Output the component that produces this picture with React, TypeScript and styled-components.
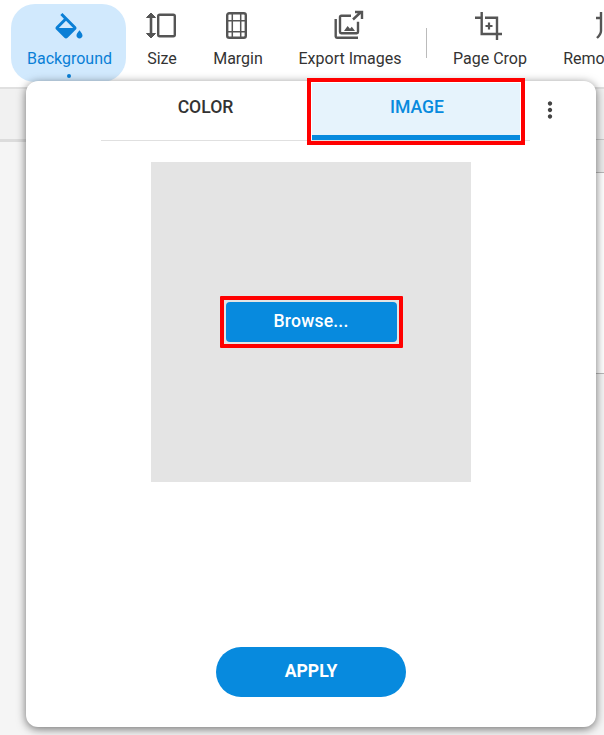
import React from "react";
import styled, { createGlobalStyle } from "styled-components";
import { MdMoreVert } from "react-icons/md";

const GlobalStyle = createGlobalStyle`
  html, body {
    margin: 0;
    padding: 0;
    background: #f5f5f5;
    font-family: Roboto, "Liberation Sans", sans-serif;
    overflow: hidden;
  }
`;

const BucketIcon = () => (
  <svg width="36" height="36" viewBox="0 -3.33 24 24" fill="#0a7fd6">
    <path d="M16.56 8.94 7.62 0 6.21 1.41l2.38 2.38-5.15 5.15c-.59.59-.59 1.54 0 2.12l5.5 5.5c.29.29.68.44 1.06.44s.77-.15 1.06-.44l5.5-5.5c.59-.58.59-1.53 0-2.12zM5.21 10 10 5.21 14.79 10H5.210zM19 11.500s-2 2.170-2 3.500c0 1.100.9 2 2 2s2-.9 2-2c0-1.330-2-3.500-2-3.500z" />
  </svg>
);

const SizeIcon = () => (
  <svg width="36" height="36" viewBox="0 0 36 36" fill="none" stroke="#555">
    <rect x="14.2" y="6.700" width="16.600" height="21.600" rx="1.500" strokeWidth="2.400" />
    <path d="M7 6v23" strokeWidth="2.600" />
    <path d="M2.500 9.500 7 5l4.500 4.500zM2.500 25.500 7 30l4.500-4.500z" fill="#555" strokeWidth="1" />
  </svg>
);

const MarginIcon = () => (
  <svg width="36" height="36" viewBox="0 0 36 36" fill="none" stroke="#555">
    <rect x="7.200" y="5.200" width="18.600" height="24.600" rx="2" strokeWidth="2.400" />
    <path d="M12.300 5v25M20.700 5v25M7 12.700h19M7 23.700h19" strokeWidth="1.500" />
  </svg>
);

const ExportIcon = () => (
  <svg width="36" height="36" viewBox="0 0 36 36" fill="none" stroke="#555" strokeWidth="2.400">
    <path d="M3.700 11v17.500a1.200 1.200 0 0 0 1.200 1.200H26" />
    <path d="M19 7.700h-9.800a1.200 1.200 0 0 0-1.200 1.200v15.200a1.200 1.200 0 0 0 1.200 1.200h15.600a1.200 1.200 0 0 0 1.200-1.200V13.700" />
    <path d="M21 11.500 29 4M23 4h7v7" />
    <path d="M12 23l3.600-5 2.400 2.800 1.800-2 3.200 4.200z" fill="#555" stroke="none" />
  </svg>
);

const CropPlusIcon = () => (
  <svg width="36" height="36" viewBox="0 0 36 36" fill="none" stroke="#555" strokeWidth="2.400">
    <path d="M3 9.700h7M9.700 4v22H30" />
    <path d="M13 9.700h12v22.300" />
    <path d="M17 14.500v7M13.500 18h7" strokeWidth="2.200" />
  </svg>
);

const RemoveIcon = () => (
  <svg width="36" height="36" viewBox="0 0 36 36" fill="none" stroke="#555" strokeWidth="2.400">
    <path d="M22 10h5M27 4v19c0 2.500-1.500 4.500-4 7" />
  </svg>
);

const tools = [
  { label: "Size", icon: <SizeIcon />, width: 72 },
  { label: "Margin", icon: <MarginIcon />, width: 80 },
  { label: "Export Images", icon: <ExportIcon />, width: 144 },
];

const App = () => (
  <Page>
    <GlobalStyle />
    <Toolbar>
      <ActiveTool>
        <BucketIcon />
        <ToolLabel $active>Background</ToolLabel>
        <Dot />
      </ActiveTool>
      {tools.map((tool) => (
        <Tool key={tool.label} $width={tool.width}>
          {tool.icon}
          <ToolLabel>{tool.label}</ToolLabel>
        </Tool>
      ))}
      <Divider />
      <Tool $width={126}>
        <CropPlusIcon />
        <ToolLabel>Page Crop</ToolLabel>
      </Tool>
      <Tool $width={78}>
        <RemoveIcon />
        <ToolLabel>Remove</ToolLabel>
      </Tool>
    </Toolbar>
    <SubBar />
    <Workspace>
      <Sidebar />
      <Main>
        <Ruler />
        <Sheet />
      </Main>
    </Workspace>

    <Panel>
      <Tabs>
        <TabList>
          <Tab>COLOR</Tab>
          <Tab $active>IMAGE</Tab>
        </TabList>
        <MoreButton>
          <MdMoreVert size={26} color="#444" />
        </MoreButton>
      </Tabs>
      <PanelBody>
        <DropArea>
          <BrowseFrame>
            <BrowseButton>Browse...</BrowseButton>
          </BrowseFrame>
        </DropArea>
        <ApplyButton>APPLY</ApplyButton>
      </PanelBody>
    </Panel>
  </Page>
);

export default App;

const Page = styled.div`
  position: relative;
  width: 604px;
  height: 735px;
  overflow: hidden;
  background: #f5f5f5;
`;

const Toolbar = styled.div`
  display: flex;
  align-items: flex-start;
  height: 83px;
  padding: 4px 0 0 11px;
  background: #fff;
  border-bottom: 2px solid #e0e0e0;
`;

const Tool = styled.div<{ $width: number }>`
  display: flex;
  flex-direction: column;
  align-items: center;
  flex: none;
  width: ${(p) => p.$width}px;
  padding-top: 4px;
  white-space: nowrap;
`;

const ActiveTool = styled.div`
  display: flex;
  flex-direction: column;
  align-items: center;
  flex: none;
  width: 115px;
  height: 78px;
  padding-top: 4px;
  box-sizing: border-box;
  border-radius: 24px;
  background: #d1e9fd;
`;

const ToolLabel = styled.span<{ $active?: boolean }>`
  margin-top: 5px;
  padding-left: ${(p) => (p.$active ? "2px" : "0")};
  font-size: 16px;
  line-height: 20px;
  color: ${(p) => (p.$active ? "#0a7fd6" : "#333")};
`;

const Dot = styled.span`
  width: 4px;
  height: 4px;
  margin-top: 5px;
  border-radius: 50%;
  background: #0a7fd6;
`;

const Divider = styled.div`
  flex: none;
  width: 1px;
  height: 30px;
  margin: 24px 0 0 4px;
  background: #bbb;
`;

const SubBar = styled.div`
  height: 50px;
  background: #f1f1f1;
`;

const Workspace = styled.div`
  display: flex;
`;

const Sidebar = styled.div`
  flex: none;
  width: 40px;
  height: 3px;
  background: #dcdcdc;
`;

const Main = styled.div`
  flex: 1;
  border-top: 1px solid #c8c8c8;
`;

const Ruler = styled.div`
  height: 32px;
  background: #ececec;
  border-bottom: 1px solid #b8b8b8;
`;

const Sheet = styled.div`
  height: 200px;
  background: #fff;
  border-bottom: 1px solid #b8b8b8;
`;

const Panel = styled.div`
  position: absolute;
  left: 26px;
  top: 81px;
  display: flex;
  flex-direction: column;
  width: 570px;
  height: 646px;
  border-radius: 12px;
  background: #fff;
  box-shadow: 0 2px 10px rgba(0, 0, 0, 0.55);
`;

const Tabs = styled.div`
  display: flex;
  align-items: flex-start;
  flex: none;
  height: 60px;
  padding: 2px 0 0 75px;
  box-sizing: border-box;
`;

const TabList = styled.div`
  display: flex;
  width: 429px;
  height: 58px;
  box-sizing: border-box;
  border-bottom: 1px solid #e0e0e0;
`;

const Tab = styled.div<{ $active?: boolean }>`
  display: flex;
  justify-content: center;
  align-items: flex-start;
  flex: none;
  width: ${(p) => (p.$active ? "208px" : "209px")};
  height: ${(p) => (p.$active ? "57px" : "auto")};
  margin-left: ${(p) => (p.$active ? "2px" : "0")};
  padding-top: 14px;
  padding-left: ${(p) => (p.$active ? "2px" : "0")};
  box-sizing: border-box;
  font-size: 17.6px;
  font-weight: 500;
  line-height: 20px;
  color: ${(p) => (p.$active ? "#078ade" : "#333")};
  background: ${(p) => (p.$active ? "#e6f3fc" : "transparent")};
  border-bottom: ${(p) => (p.$active ? "5px solid #078ade" : "none")};
  outline: ${(p) => (p.$active ? "4px solid #f00" : "none")};
  outline-offset: 1px;
`;

const MoreButton = styled.div`
  display: flex;
  margin: 14px 0 0 7px;
`;

const PanelBody = styled.div`
  display: flex;
  flex-direction: column;
  align-items: center;
  flex: 1;
  padding: 21px 0 30px;
`;

const DropArea = styled.div`
  display: flex;
  align-items: center;
  justify-content: center;
  width: 320px;
  height: 320px;
  background: #e4e4e4;
`;

const BrowseFrame = styled.div`
  display: flex;
  padding: 2px;
  border: 4px solid #f00;
  border-radius: 1px;
`;

const BrowseButton = styled.div`
  display: flex;
  align-items: center;
  justify-content: center;
  width: 171px;
  height: 40px;
  padding-bottom: 2px;
  box-sizing: border-box;
  border-radius: 4px;
  background: #078ade;
  color: #fff;
  font-size: 17.6px;
  font-weight: 500;
  letter-spacing: 0.2px;
`;

const ApplyButton = styled.div`
  display: flex;
  align-items: center;
  justify-content: center;
  width: 190px;
  height: 50px;
  padding-bottom: 2px;
  box-sizing: border-box;
  margin-top: auto;
  border-radius: 25px;
  background: #078ade;
  color: #fff;
  font-size: 17.6px;
  font-weight: 700;
`;
